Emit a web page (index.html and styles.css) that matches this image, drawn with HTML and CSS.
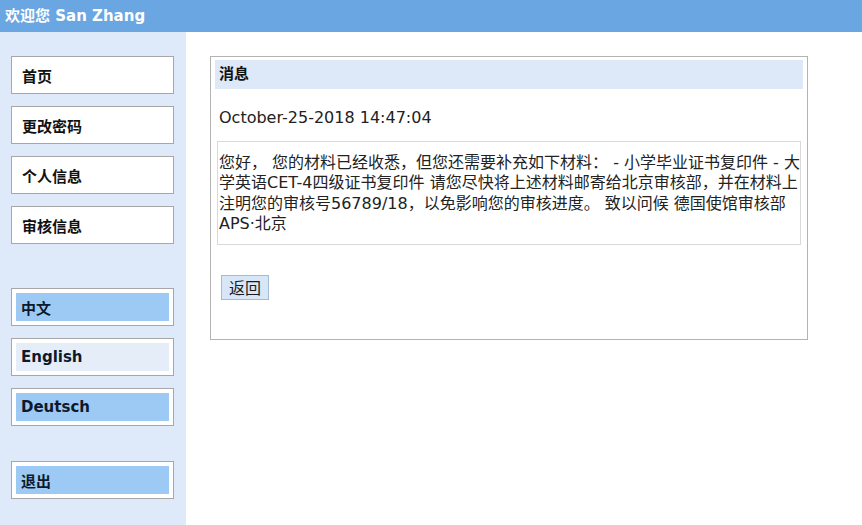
FILE: index.html
```html
<!DOCTYPE html>
<html lang="zh">
<head>
<meta charset="utf-8">
<title>消息</title>
<link rel="stylesheet" href="styles.css">
</head>
<body>
<header class="topbar">欢迎您 San Zhang</header>
<div class="layout">
  <nav class="sidebar">
    <div class="group">
      <a class="nav-item">首页</a>
      <a class="nav-item">更改密码</a>
      <a class="nav-item">个人信息</a>
      <a class="nav-item">审核信息</a>
    </div>
    <div class="group lang">
      <a class="nav-item filled"><span>中文</span></a>
      <a class="nav-item filled light"><span>English</span></a>
      <a class="nav-item filled"><span>Deutsch</span></a>
    </div>
    <div class="group logout">
      <a class="nav-item filled"><span>退出</span></a>
    </div>
  </nav>
  <main class="main">
    <section class="panel">
      <h2 class="panel-title">消息</h2>
      <div class="date">October-25-2018 14:47:04</div>
      <div class="message">您好， 您的材料已经收悉，但您还需要补充如下材料： - 小学毕业证书复印件 - 大<br>学英语CET-4四级证书复印件 请您尽快将上述材料邮寄给北京审核部，并在材料上<br>注明您的审核号56789/18，以免影响您的审核进度。 致以问候 德国使馆审核部<br>APS·北京</div>
      <button class="back">返回</button>
    </section>
  </main>
</div>
</body>
</html>
```
FILE: styles.css
```css
html, body {
  margin: 0;
  padding: 0;
  background: #ffffff;
  font-family: "DejaVu Sans", "Noto Sans CJK SC", sans-serif;
  color: #1a1a1a;
}

.topbar {
  height: 32px;
  background: #6aa6e1;
  color: #ffffff;
  font-weight: bold;
  font-size: 15px;
  line-height: 32px;
  padding-left: 5px;
}

.layout {
  display: flex;
  min-height: 493px;
}

.sidebar {
  width: 186px;
  flex: none;
  background: #deeaf9;
  padding-top: 24px;
  box-sizing: border-box;
}

.group {
  display: flex;
  flex-direction: column;
  gap: 12px;
  padding-left: 11px;
}

.group.lang {
  margin-top: 44px;
}

.group.logout {
  margin-top: 35px;
}

.nav-item {
  display: flex;
  align-items: center;
  width: 163px;
  height: 38px;
  box-sizing: border-box;
  border: 1px solid #a7a7a7;
  background: #ffffff;
  padding-left: 10px;
  font-size: 15px;
  font-weight: bold;
  color: #111111;
}

.nav-item.filled {
  padding: 4px;
}

.nav-item.filled span {
  display: flex;
  align-items: center;
  width: 100%;
  height: 100%;
  background: #9dc9f5;
  padding-left: 5px;
  color: #0e1a2b;
}

.nav-item.filled.light span {
  background: #e5edf9;
}

.main {
  flex: 1;
  padding: 24px 0 0 24px;
}

.panel {
  width: 598px;
  height: 284px;
  box-sizing: border-box;
  border: 1px solid #b3b3b3;
  padding: 3px 4px;
}

.panel-title {
  margin: 0;
  height: 29px;
  line-height: 29px;
  background: #dde9f8;
  padding-left: 4px;
  font-size: 15px;
  font-weight: bold;
  color: #111111;
}

.date {
  margin-top: 19px;
  padding-left: 4px;
  font-size: 16px;
  line-height: 20px;
  color: #222222;
}

.message {
  margin: 13px 2px 0 2px;
  border: 1px solid #d9d9d9;
  padding: 11px 0 10px 1px;
  font-size: 16px;
  line-height: 20.3px;
  color: #222222;
  white-space: nowrap;
  overflow: hidden;
}

.back {
  display: block;
  margin: 30px 0 0 6px;
  width: 48px;
  height: 25px;
  padding: 0;
  background: #d8e7f8;
  border: 1px solid #a6bad3;
  font-family: "Noto Sans CJK SC", sans-serif;
  font-size: 16px;
  line-height: 23px;
  color: #1a1a1a;
}
```
